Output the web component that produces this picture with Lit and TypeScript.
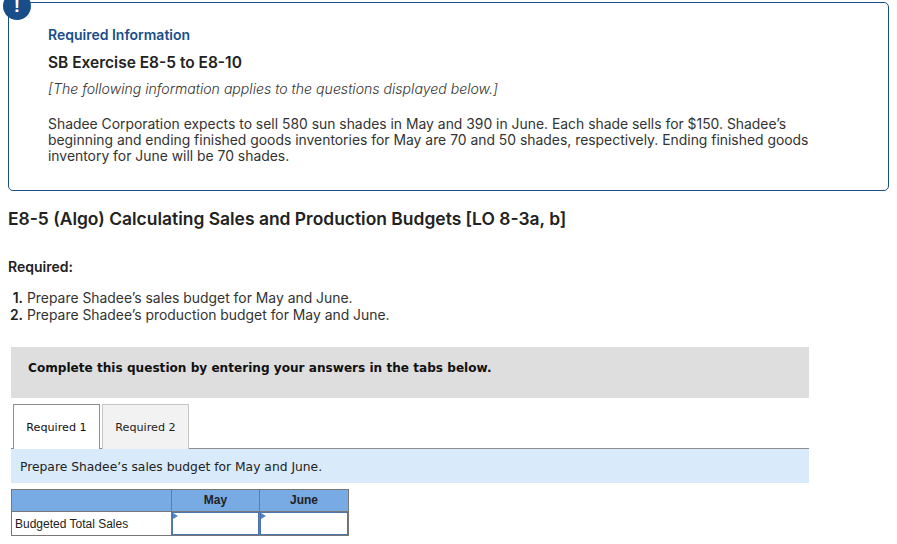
import { LitElement, html, css } from "lit";
import { customElement } from "lit/decorators.js";

@customElement("app-root")
export class AppRoot extends LitElement {
  static styles = css`
    :host { display: block; width: 897px; height: 544px; overflow: hidden; background: #fff; font-family: Inter, Lato, sans-serif; color: #2d2d2d; position: relative; }
    .page { display: flex; flex-direction: column; padding: 2px 8px 0; }
    .notice { position: relative; height: 189px; box-sizing: border-box; width: 881px; border: 1px solid #1a4e8a; border-radius: 5px; padding: 23px 39px 0; }
    .badge { position: absolute; left: -6px; top: -11px; width: 28px; height: 28px; border-radius: 50%; background: #1a4e8a; color: #fff; font: bold 19px/27px "Liberation Sans", sans-serif; text-align: center; }
    .ri { font-size: 14px; line-height: 18px; font-weight: 600; color: #1a4e8a; }
    .ex { font-size: 15.5px; line-height: 20px; font-weight: 600; margin-top: 9px; color: #222; }
    .it { font-size: 14.1px; line-height: 18px; font-style: italic; font-weight: 300; margin-top: 7px; color: #333; }
    .body { font-size: 13.9px; line-height: 16px; margin-top: 18px; color: #333; width: 775px; font-weight: 400; }
    h1 { font-size: 17.45px; line-height: 24px; font-weight: 600; margin: 16px 0 0; color: #222; }
    .req { font-size: 14px; line-height: 18px; font-weight: 600; margin-top: 27px; color: #222; }
    ol { list-style: none; margin: 14px 0 0; padding: 0; font-size: 13.9px; line-height: 17px; color: #333; }
    ol li { display: flex; }
    ol b { width: 19px; text-align: right; padding-right: 4px; box-sizing: border-box; color: #222; font-weight: 600; }
    .prompt { margin: 23px 0 0 3px; width: 798px; height: 51px; background: #dedede; box-sizing: border-box; padding: 13px 17px; font: bold 12.1px/17px "DejaVu Sans", sans-serif; color: #111; }
    .tabs { display: flex; gap: 2px; margin: 6px 0 0 5px; height: 44px; width: 796px; }
    .tab { width: 87px; height: 45px; box-sizing: border-box; border: 1px solid #c6c6c6; border-bottom: none; background: #f2f2f2; font: 11.2px/45px "DejaVu Sans", sans-serif; color: #222; text-align: center; position: relative; z-index: 1; }
    .tab.on { background: #fff; border-color: #8e8e8e; color: #111; z-index: 2; }
    .panel { margin-left: 3px; width: 798px; border-top: 1px solid #8e8e8e; }
    .hint { background: #d9ebfa; height: 34px; box-sizing: border-box; padding: 0 9px; font: 12.3px/36px "DejaVu Sans", sans-serif; color: #222; }
    table { border-collapse: collapse; margin-top: 6px; table-layout: fixed; width: 337px; font: 12px "Liberation Sans", sans-serif; }
    th, td { border: 1px solid #777; padding: 0; box-sizing: border-box; }
    th { background: #78abe3; height: 22px; padding-bottom: 2px; color: #222; font-weight: 700; }
    td { height: 24px; }
    td.l { padding-left: 3px; color: #222; }
    td.in { position: relative; box-shadow: inset 0 0 0 1px #4a76ad; }
    .mark { position: absolute; left: 1px; top: 1px; width: 0; height: 0; border-left: 5px solid #4a86c8; border-top: 3px solid transparent; border-bottom: 3px solid transparent; }
  `;
  render() {
    return html`<div class="page">
      <div class="notice">
        <div class="badge">!</div>
        <div class="ri">Required Information</div>
        <div class="ex">SB Exercise E8-5 to E8-10</div>
        <div class="it">[The following information applies to the questions displayed below.]</div>
        <div class="body">Shadee Corporation expects to sell 580 sun shades in May and 390 in June. Each shade sells for $150. Shadee’s beginning and ending finished goods inventories for May are 70 and 50 shades, respectively. Ending finished goods inventory for June will be 70 shades.</div>
      </div>
      <h1>E8-5 (Algo) Calculating Sales and Production Budgets [LO 8-3a, b]</h1>
      <div class="req">Required:</div>
      <ol>
        <li><b>1.</b><span>Prepare Shadee’s sales budget for May and June.</span></li>
        <li><b>2.</b><span>Prepare Shadee’s production budget for May and June.</span></li>
      </ol>
      <div class="prompt">Complete this question by entering your answers in the tabs below.</div>
      <div class="tabs"><div class="tab on">Required 1</div><div class="tab">Required 2</div></div>
      <div class="panel">
        <div class="hint">Prepare Shadee’s sales budget for May and June.</div>
        <table>
          <colgroup><col style="width:160px"><col style="width:88px"><col style="width:89px"></colgroup>
          <tr><th></th><th>May</th><th>June</th></tr>
          <tr><td class="l">Budgeted Total Sales</td><td class="in"><span class="mark"></span></td><td class="in"><span class="mark"></span></td></tr>
        </table>
      </div>
    </div>`;
  }
}
